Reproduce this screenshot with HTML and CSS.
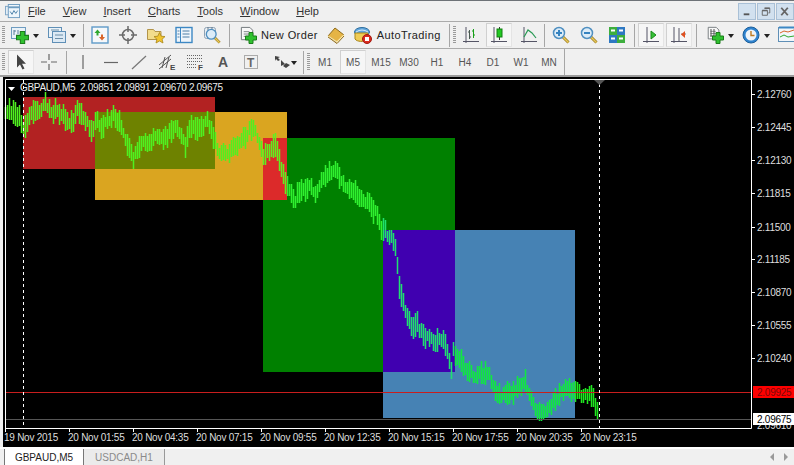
FILE: index.html
```html
<!DOCTYPE html>
<html lang="en">
<head>
<meta charset="utf-8">
<title>GBPAUD,M5</title>
<link rel="stylesheet" href="styles.css">
</head>
<body>
<svg class="defs" width="0" height="0" aria-hidden="true">
  <defs>
    <symbol id="plus" viewBox="0 0 12 12"><path d="M4 .5h4v3.500h3.500v4H8v3.500H4V8H.5V4H4z" fill="#2fc12f" stroke="#1a7d1a"/></symbol>
    <symbol id="doc" viewBox="0 0 18 18"><path d="M2.500 1.500h9l3 3v10h-12z" fill="#f8f8f8" stroke="#6d7478"/><path d="M5 6h6M5 8.500h6M5 11h4" stroke="#7b8184"/></symbol>
    <symbol id="lens" viewBox="0 0 18 18"><path d="M11 11l5.500 5.500" stroke="#9b7a1e" stroke-width="3"/><path d="M11 11l5.500 5.500" stroke="#e8c95a" stroke-width="1.500"/><circle cx="7" cy="7" r="5.500" fill="#dcecf8" stroke="#4f8fc0" stroke-width="1.500"/></symbol>
  </defs>
</svg>

<header class="menubar">
  <svg class="ico16 app" viewBox="0 0 16 16"><rect x=".5" y="2.500" width="10" height="9" fill="#e4eef6" stroke="#7fa6c6"/><rect x="3.500" y=".5" width="12" height="14" fill="#eef5fb" stroke="#6f9cc0"/><path d="M5.500 8l2 3 2-4 2 3 2-3" fill="none" stroke="#4a7fa8"/><path d="M3.500 3.500h12" stroke="#6f9cc0" stroke-width="2"/></svg>
  <nav class="menu">
    <span><u>F</u>ile</span><span><u>V</u>iew</span><span><u>I</u>nsert</span><span><u>C</u>harts</span><span><u>T</u>ools</span><span><u>W</u>indow</span><span><u>H</u>elp</span>
  </nav>
  <div class="winbtns">
    <span class="winbtn"><svg viewBox="0 0 17 16"><path d="M5 11h6" stroke="#555" stroke-width="2"/></svg></span>
    <span class="winbtn"><svg viewBox="0 0 17 16"><path d="M7 4.500h5.500v5H11M4.500 7H10v5H4.500z" fill="none" stroke="#666"/><path d="M7 4.500h5.500M4.500 7H10" stroke="#666" stroke-width="1.500"/></svg></span>
    <span class="winbtn"><svg viewBox="0 0 17 16"><path d="M4.500 4l7 8M11.500 4l-7 8" stroke="#666" stroke-width="2"/></svg></span>
  </div>
</header>

<div class="toolbar">
  <i class="grip"></i>
  <span class="slot drop lead">
    <svg class="ico" viewBox="0 0 18 18"><rect x=".5" y="1.500" width="14" height="11" fill="#eaf2f8" stroke="#6f9cc0"/><path d="M3 4v5M3 5h2M7 4v4" stroke="#5b7f9a"/><use href="#plus" x="5" y="5" width="13" height="13"/></svg><b class="caret"></b>
  </span>
  <span class="slot drop">
    <svg class="ico" viewBox="0 0 18 18"><rect x=".5" y="1.500" width="13" height="10" fill="#eaf2f8" stroke="#5f8fb6"/><rect x="4.500" y="5.500" width="13" height="11" fill="#dce9f4" stroke="#5f8fb6"/><path d="M3 4h8M7 9h8M7 12.500h8" stroke="#6b8ea8"/></svg><b class="caret"></b>
  </span>
  <i class="sep"></i>
  <span class="slot"><svg class="ico" viewBox="0 0 18 18"><rect x="1" y="1" width="16" height="16" fill="#f6f8fa" stroke="#5f9ac8" stroke-width="1.400"/><path d="M6.500 3.500l-3 3.500h2v2.500h2V7h2z" fill="#2fa82f"/><path d="M11 14.500l3-3.500h-2V8.500h-2V11H8z" fill="#d9662a"/></svg></span>
  <span class="slot"><svg class="ico" viewBox="0 0 18 18"><circle cx="9" cy="9" r="5.500" fill="none" stroke="#6a6a6a" stroke-width="1.500"/><path d="M9 0v6M9 12v6M0 9h6M12 9h6" stroke="#6a6a6a" stroke-width="1.500"/></svg></span>
  <span class="slot"><svg class="ico" viewBox="0 0 18 18"><path d="M.5 3.500h6l1.500 2h6v8H.5z" fill="#f2dc8c" stroke="#b2944a"/><path d="M12.500 6.500l1.700 3.700 3.800.4-2.900 2.600.9 3.800-3.500-2-3.500 2 .9-3.800-2.900-2.600 3.800-.4z" fill="#f0c430" stroke="#a98517" stroke-width=".8"/></svg></span>
  <span class="slot"><svg class="ico" viewBox="0 0 18 18"><rect x="1" y="1.500" width="16" height="15" fill="#eef5fb" stroke="#3d88c4" stroke-width="1.400"/><path d="M5.500 2v14" stroke="#3d88c4"/><path d="M2.500 5h2M2.500 8h2M2.500 11h2M7.500 5h7M7.500 8h7M7.500 11h7" stroke="#4d7ea6"/></svg></span>
  <span class="slot"><svg class="ico" viewBox="0 0 18 18"><rect x="1.500" y="1.500" width="11" height="11" rx="2" fill="#e8edf2" stroke="#8ea2b4"/><path d="M5 1v3M9 1v3M5 5v4l2-2 2 1" fill="none" stroke="#6a7f91"/><use href="#lens" x="2" y="2" width="16" height="16"/></svg></span>
  <i class="sep"></i>
  <span class="labelled order">
    <svg class="ico" viewBox="0 0 18 18"><use href="#doc" width="17" height="17"/><use href="#plus" x="6" y="6" width="12" height="12"/></svg>
    <span class="lbl">New Order</span>
  </span>
  <span class="slot book"><svg class="ico" viewBox="0 0 18 18"><path d="M1 10l7-8 9 7-7 7z" fill="#e5b445" stroke="#8f6b1c"/><path d="M1 10l9 6 7-7" fill="none" stroke="#fae8ac" stroke-width="1.200"/><path d="M1 11l9 6.500 7-7.500" fill="none" stroke="#8f6b1c"/></svg></span>
  <span class="labelled auto">
    <svg class="ico" viewBox="0 0 18 18"><ellipse cx="8" cy="6" rx="7.500" ry="4.500" fill="#62a6dc" stroke="#2e6f9f"/><path d="M1 7v6c2 3 9 3 12 1l1-7z" fill="#f0cc55" stroke="#a98517"/><path d="M2 6q6-4 12 0" fill="none" stroke="#d8ecf8"/><circle cx="13" cy="13" r="4.500" fill="#d92b20" stroke="#a01a10"/><rect x="11" y="11" width="4" height="4" fill="#fff"/></svg>
    <span class="lbl">AutoTrading</span>
  </span>
  <i class="sep wide"></i>
  <i class="grip"></i>
  <span class="slot s1"><svg class="ico" viewBox="0 0 18 18"><path d="M1 15.500h16M4 1v16M1 15.500h3" stroke="#556" fill="none"/><path d="M7.500 4v9M7.500 6H6M7.500 11H9" stroke="#4a5a52" fill="none"/><path d="M11.500 3v9M11.500 5H10M11.500 9H13" stroke="#18a018" fill="none"/></svg></span>
  <span class="slot on"><svg class="ico" viewBox="0 0 18 18"><path d="M1 15.500h16M4 1v16" stroke="#556"/><path d="M9.500 1v13" stroke="#333"/><rect x="7" y="3" width="5" height="8" fill="#23c823" stroke="#128012"/></svg></span>
  <span class="slot s2"><svg class="ico" viewBox="0 0 18 18"><path d="M1 15.500h16M4 1v16" stroke="#556"/><path d="M4 11l4-7 4 3 4 5" fill="none" stroke="#2a9a55" stroke-width="1.200"/></svg></span>
  <i class="sep"></i>
  <span class="slot"><svg class="ico" viewBox="0 0 18 18"><use href="#lens" width="18" height="18"/><path d="M4 7h6M7 4v6" stroke="#3583c0" stroke-width="2"/></svg></span>
  <span class="slot"><svg class="ico" viewBox="0 0 18 18"><use href="#lens" width="18" height="18"/><path d="M4 7h6" stroke="#3583c0" stroke-width="2"/></svg></span>
  <span class="slot"><svg class="ico" viewBox="0 0 18 18"><rect x="1" y="1" width="8" height="8" fill="#3dae3d"/><rect x="9" y="1" width="8" height="8" fill="#2e78c2"/><rect x="1" y="9" width="8" height="8" fill="#2e78c2"/><rect x="9" y="9" width="8" height="8" fill="#3dae3d"/><path d="M3 4.500h4M11 4.500h4M3 12.500h4M11 12.500h4" stroke="#fff" stroke-width="2"/></svg></span>
  <i class="sep"></i>
  <span class="slot on"><svg class="ico" viewBox="0 0 18 18"><path d="M1 15.500h16M5 1v16" stroke="#556"/><path d="M9 5l5 4-5 4z" fill="#35c035" stroke="#1c8a1c"/></svg></span>
  <span class="slot on"><svg class="ico" viewBox="0 0 18 18"><path d="M1 15.500h16M4 1v16M9 2v14" stroke="#556"/><path d="M11 8h5" stroke="#777"/><path d="M15 5l-4 3.500 4 3.500z" fill="#e05020"/></svg></span>
  <i class="sep"></i>
  <span class="slot drop narrow add">
    <svg class="ico" viewBox="0 0 18 18"><use href="#doc" width="16" height="16"/><path d="M5 3v8M8 3v7" stroke="#555"/><use href="#plus" x="6" y="6" width="12" height="12"/></svg><b class="caret"></b>
  </span>
  <span class="slot drop narrow">
    <svg class="ico" viewBox="0 0 18 18"><circle cx="9" cy="9" r="8" fill="#2f83cf" stroke="#1c5f9a"/><circle cx="9" cy="9" r="5.500" fill="#eef4f8"/><path d="M9 5v4.500h3.500" fill="none" stroke="#c07a20" stroke-width="1.400"/></svg><b class="caret"></b>
  </span>
  <span class="slot"><svg class="ico" viewBox="0 0 18 18"><rect x=".5" y="1.500" width="17" height="14" fill="#f2f7fb" stroke="#5f8fb6"/><path d="M1 1.500h16" stroke="#3d88c4" stroke-width="2"/><path d="M2 7l4-2 4 1 6-2" fill="none" stroke="#d9662a"/><path d="M2 11l4-2 4 2 6-1" fill="none" stroke="#2fa82f"/></svg></span>
</div>

<div class="toolbar second">
  <i class="grip"></i>
  <span class="slot tool on first"><svg class="ico" viewBox="0 0 18 18"><path d="M5 1.500v13l3-3 2.500 5 2-1-2.500-4.800h4z" fill="#444"/></svg></span>
  <span class="slot tool"><svg class="ico" viewBox="0 0 18 18"><path d="M9 1v6M9 11v6M1 9h6M11 9h6" stroke="#666" stroke-width="1.200"/></svg></span>
  <i class="sep"></i>
  <span class="slot tool"><svg class="ico" viewBox="0 0 18 18"><path d="M9 2v14" stroke="#666" stroke-width="1.200"/></svg></span>
  <span class="slot tool"><svg class="ico" viewBox="0 0 18 18"><path d="M2 9.500h14" stroke="#666" stroke-width="1.200"/></svg></span>
  <span class="slot tool"><svg class="ico" viewBox="0 0 18 18"><path d="M2 16L16 3" stroke="#777" stroke-width="1.200"/></svg></span>
  <span class="slot tool"><svg class="ico" viewBox="0 0 18 18"><path d="M1 12L13 2M1 16L13 6M4 15l3-11M8 15l3-11" stroke="#555"/><text class="letter" x="12" y="17">E</text></svg></span>
  <span class="slot tool"><svg class="ico" viewBox="0 0 18 18"><path d="M1 2.500h15M1 5.500h15M1 8.500h15M1 11.500h10M1 14.500h10" stroke="#666" stroke-dasharray="1 1"/><text class="letter" x="12" y="17">F</text></svg></span>
  <span class="slot tool ltr">A</span>
  <span class="slot tool"><svg class="ico" viewBox="0 0 18 18"><rect x="2.500" y="2.500" width="13" height="13" fill="none" stroke="#666" stroke-dasharray="1 1"/><text class="bigt" x="5" y="14">T</text></svg></span>
  <span class="slot drop tool arrows">
    <svg class="ico" viewBox="0 0 18 18"><path d="M2 3l5 1-2 1 2 2-2 1-2-2-1 2z" fill="#444"/><path d="M8 7l4 4-4 2zM13 10l4 2-4 3-3-2z" fill="#444"/></svg><b class="caret"></b>
  </span>
  <i class="sep"></i>
  <i class="grip"></i>
  <div class="periods">
    <span>M1</span><span class="cur">M5</span><span>M15</span><span>M30</span><span>H1</span><span>H4</span><span>D1</span><span>W1</span><span>MN</span>
  </div>
  <i class="sep end"></i>
</div>

<main class="pane">
  <svg id="chart" class="chart" width="791" height="370" viewBox="3 77 791 370">
    <rect class="bg" x="3" y="77" width="791" height="370"/>
    <rect x="23" y="97" width="192" height="72" fill="#b22222"/>
    <rect x="95" y="112" width="192" height="88" fill="#daa520"/>
    <rect x="95" y="112" width="120" height="57" fill="#6e8200"/>
    <rect x="263" y="138" width="192" height="234" fill="#008000"/>
    <rect x="263" y="138" width="24" height="62" fill="#dc2a2a"/>
    <rect x="383" y="230" width="192" height="188" fill="#4682b4"/>
    <rect x="383" y="230" width="72" height="142" fill="#4000b0"/>
    <g id="bars"></g>
    <path class="gridline" d="M5 419.500H751"/>
    <path class="redline" d="M5 392.500H751"/>
    <path class="vdash" d="M23.500 80V428M599.500 84V428"/>
    <path class="marker" d="M594 80h11l-5.500 5z"/>
    <path class="frame" d="M5.500 79.500H751.500V428.500H5.500z"/>
    <path class="tri" d="M8 87h7l-3.500 4z"/>
    <text class="t head" x="20" y="91">GBPAUD,M5  2.09851 2.09891 2.09670 2.09675</text>
    <path class="frame" d="M751 94.500h4M751 127.500h4M751 160.500h4M751 193.500h4M751 227.500h4M751 259.500h4M751 292.500h4M751 325.500h4M751 358.500h4M5.500 428v4M69.500 428v4M133.500 428v4M197.500 428v4M261.500 428v4M325.500 428v4M389.500 428v4M453.500 428v4M517.500 428v4M581.500 428v4"/>
    <g class="t">
      <text x="757" y="98">2.12760</text><text x="757" y="131">2.12445</text><text x="757" y="164">2.12130</text><text x="757" y="197">2.11815</text><text x="757" y="231">2.11500</text><text x="757" y="263">2.11185</text><text x="757" y="296">2.10870</text><text x="757" y="329">2.10555</text><text x="757" y="362">2.10240</text><text x="757" y="429">2.09610</text>
      <text x="4" y="441">19 Nov 2015</text><text x="68" y="441">20 Nov 01:55</text><text x="132" y="441">20 Nov 04:35</text><text x="196" y="441">20 Nov 07:15</text><text x="260" y="441">20 Nov 09:55</text><text x="324" y="441">20 Nov 12:35</text><text x="388" y="441">20 Nov 15:15</text><text x="452" y="441">20 Nov 17:55</text><text x="516" y="441">20 Nov 20:35</text><text x="580" y="441">20 Nov 23:15</text>
    </g>
    <rect x="753" y="386" width="41" height="12" fill="#f00"/>
    <text class="t tag-red" x="757" y="396">2.09925</text>
    <rect x="753" y="413" width="41" height="12" fill="#fff"/>
    <text class="t tag-white" x="757" y="423">2.09675</text>
  </svg>
</main>

<footer class="tabs">
  <span class="tab active">GBPAUD,M5</span>
  <span class="tab">USDCAD,H1</span>
  <span class="scroll"><b class="arrow left"></b><b class="arrow right"></b></span>
</footer>
<script src="chart.js"></script>
</body>
</html>
```
FILE: styles.css
```css
* { box-sizing: border-box; }
html, body { margin: 0; height: 100%; }
body {
  width: 794px; height: 465px; overflow: hidden;
  background: #f0f0f0; color: #222;
  font-family: "Liberation Sans", Arial, sans-serif; font-size: 11px;
  display: flex; flex-direction: column;
}
svg { display: block; flex: none; }
.defs { position: absolute; }

.menubar {
  height: 22px; flex: none; display: flex; align-items: center;
  border-top: 1px solid #6d7277; border-bottom: 1px solid #ababab; padding-left: 5px;
}
.ico16 { width: 15px; height: 15px; }
.menu { display: flex; gap: 17px; margin-left: 8px; font-size: 11px; color: #333; }
.winbtns { margin-left: auto; display: flex; gap: 1px; align-self: flex-start; margin-top: 2px; }
.winbtn { width: 18px; height: 17px; background: #d2e1ef; border: 1px solid #a9c0d6; }
.winbtn svg { width: 16px; height: 15px; }

.toolbar {
  height: 27px; flex: none; display: flex; align-items: center; padding-left: 2px;
  border-bottom: 1px solid #ababab; overflow: hidden;
}
.second { height: 28px; border-bottom: 2px solid #9b9b9b; }
.grip { width: 3px; height: 18px; flex: none; background: repeating-linear-gradient(#9a9a9a 0 1px, #f0f0f0 1px 2px); }
.sep { width: 1px; height: 23px; flex: none; background: #a6a6a6; margin: 0 2px 0 3px; }
.sep.wide { margin: 0 3px 0 8px; }
.sep.end { height: 26px; margin-left: 1px; }
.slot { width: 28px; height: 24px; flex: none; display: flex; align-items: center; justify-content: center; }
.ico { width: 18px; height: 18px; }
.drop { width: 37px; justify-content: flex-start; padding-left: 5px; }
.lead { margin-left: 1px; }
.narrow { width: 36px; }
.add { margin-left: 2px; }
.caret { width: 0; height: 0; margin-left: 4px; margin-top: 1px; border: 3.500px solid transparent; border-top: 4px solid #222; border-bottom: 0; }
.on { background: #f6f6f6; border: 1px solid #d0d0d0; border-bottom-color: #e4e4e4; border-right-color: #e4e4e4; width: 26px; margin: 0 1px; }
.s1 { margin-left: 1px; }
.s2 { margin: 0 -2px 0 2px; }
.labelled { display: flex; align-items: center; flex: none; }
.order { margin-left: 7px; gap: 4px; }
.book { margin-left: 4px; }
.auto { margin-left: 4px; gap: 5px; }
.lbl { font-size: 11px; color: #222; letter-spacing: .4px; }

.second .slot.tool { color: #555; }
.first { margin-left: 3px; }
.ltr { font-size: 14px; font-weight: 700; color: #666; }
.letter { font: 700 8px "Liberation Sans", sans-serif; fill: #444; }
.bigt { font: 700 12px "Liberation Sans", sans-serif; fill: #666; }
.arrows { width: 32px; margin-left: 3px; padding-left: 5px; }
.arrows .caret { margin-left: 0; }
.second .grip:not(:first-child) { margin-left: 1px; }
.periods { display: flex; margin-left: 1px; color: #555; font-size: 10px; }
.periods span { width: 28px; height: 24px; display: flex; align-items: center; justify-content: center; }
.periods .cur { background: #f6f6f6; border: 1px solid #d0d0d0; border-bottom-color: #e4e4e4; border-right-color: #e4e4e4; width: 26px; margin: 0 1px; }

.pane { height: 370px; flex: none; margin-left: 3px; }
.bg { fill: #000; }
.frame { fill: none; stroke: #fff; stroke-width: 1; }
.gridline { stroke: #555; stroke-width: 1; fill: none; }
.redline { stroke: #c81e1e; stroke-width: 1; fill: none; }
.vdash { stroke: #fff; stroke-width: 1; stroke-dasharray: 3 3; fill: none; }
.marker { fill: #555; }
.tri { fill: #fff; }
.bar { fill: none; stroke-width: 1.500; }
.t { font: 10px "Liberation Sans", sans-serif; fill: #dedede; letter-spacing: -.25px; }
.head { white-space: pre; fill: #ececec; letter-spacing: -.33px; }
.tag-red { fill: #7a0808; }
.tag-white { fill: #000; }

.tabs {
  flex: 1; display: flex; align-items: flex-end;
  border-top: 2px solid #fff; padding-left: 4px;
}
.tab { height: 16px; width: 81px; display: flex; align-items: center; justify-content: center; color: #8a8a8a; font-size: 10px; border-right: 1px solid #999; background: #ebebeb; }
.tab.active { width: 80px; background: #fff; color: #222; border-left: 1px solid #777; border-right: 1px solid #777; }
.scroll { margin-left: auto; display: flex; gap: 10px; margin-right: 6px; align-self: center; }
.arrow { width: 0; height: 0; border: 4px solid transparent; }
.arrow.left { border-right-color: #999; border-left: 0; }
.arrow.right { border-left-color: #999; border-right: 0; }
```
FILE: chart.js
```js
// Price path read off the chart: x pixel, mid-bar y pixel.
var pts = [[5,116],[9,112],[17,114],[20,120],[24,131],[30,116],[38,112],[45,104],[50,112],[55,111],[60,114],[65,119],[72,122],[77,109],[85,120],[92,131],[95,118],[100,128],[113,115],[120,125],[125,143],[133,158],[140,144],[150,141],[155,135],[165,138],[173,127],[180,134],[185,145],[190,127],[198,131],[207,122],[213,135],[218,150],[225,155],[230,150],[240,141],[245,136],[252,126],[258,140],[263,155],[270,150],[275,146],[280,165],[285,180],[290,190],[294,203],[300,187],[305,190],[310,185],[315,193],[320,185],[325,175],[330,171],[335,167],[340,180],[345,186],[350,190],[355,190],[360,197],[365,201],[372,208],[378,214],[380,232],[384,226],[388,240],[392,238],[396,252],[399,290],[403,305],[408,318],[412,327],[416,322],[420,330],[425,336],[430,340],[435,344],[440,336],[445,346],[448,356],[451,368],[453,352],[458,358],[463,367],[470,372],[475,376],[480,374],[485,373],[490,377],[495,391],[500,396],[505,394],[510,395],[515,390],[520,386],[525,384],[530,400],[535,408],[540,414],[545,410],[550,405],[555,400],[560,392],[565,388],[570,391],[575,390],[580,394],[585,394],[590,396],[594,401],[596,408],[598,413]];
var zones = [[263,"#50f020"],[287,"#60f020"],[383,"#30f030"],[455,"#20e070"],[575,"#10e840"],[999,"#20e820"]];
var seed = 77;
function rnd() { seed = (seed * 16807) % 2147483647; return seed / 2147483647; }
function midAt(x) {
  for (var i = 1; i < pts.length; i++) {
    if (x <= pts[i][0]) {
      var a = pts[i - 1], b = pts[i];
      return a[1] + (b[1] - a[1]) * (x - a[0]) / (b[0] - a[0]);
    }
  }
  return pts[pts.length - 1][1];
}
var d = zones.map(function () { return ""; });
for (var x = 5; x <= 598; x += 2) {
  var m = midAt(x) + (rnd() - 0.5) * 6;
  var h = 5 + rnd() * 7;
  if (x > 594) { h = 9; }
  var z = 0;
  while (x >= zones[z][0]) { z++; }
  d[z] += "M" + (x + 0.5) + " " + Math.round(m - h) + "V" + Math.round(m + h);
}
var g = document.getElementById("bars");
zones.forEach(function (zone, i) {
  var p = document.createElementNS("http://www.w3.org/2000/svg", "path");
  p.setAttribute("d", d[i]);
  p.setAttribute("class", "bar");
  p.setAttribute("stroke", zone[1]);
  g.appendChild(p);
});
```
